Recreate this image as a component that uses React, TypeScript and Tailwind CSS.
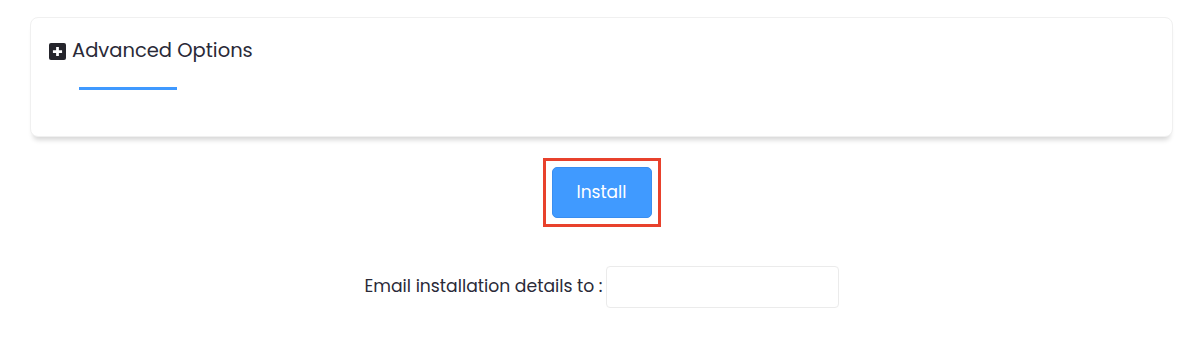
import { useState } from 'react';

export default function App() {
  const [email, setEmail] = useState('');

  return (
    <div className="w-[1200px] h-[344px] bg-white font-['Poppins','Inter',sans-serif] text-[#2a2a38]">
      {/* Advanced options card */}
      <div className="pt-[17px] pl-[30px] pr-[27px]">
        <div className="h-[120px] rounded-lg bg-white border border-[#f0f0f0] shadow-[0_6px_5px_-3px_rgba(0,0,0,0.16)] px-[18px] pt-[21px]">
          <div className="flex items-center gap-[6px]">
            <span className="w-[17px] h-[17px] rounded-[2px] bg-[#25252c] flex items-center justify-center">
              <svg viewBox="0 0 12 12" className="w-[11px] h-[11px]">
                <path d="M4.5 1h3v3.5H11v3H7.5V11h-3V7.5H1v-3h3.5z" fill="#fff" />
              </svg>
            </span>
            <span className="text-[19.5px] leading-[24px]">Advanced Options</span>
          </div>
          <div className="ml-[30px] mt-[24px] w-[98px] h-[3px] bg-[#3f99ff]" />
        </div>
      </div>

      {/* Install button */}
      <div className="flex justify-center mt-[21px] pl-[3px]">
        <div className="border-[3px] border-[#e8412c] p-[6px]">
          <button className="w-[100px] h-[51px] rounded-[5px] bg-[#409aff] text-white text-[17px] border border-[#3a8ef0]">
            Install
          </button>
        </div>
      </div>

      {/* Email row */}
      <div className="flex justify-center items-center mt-[39px] pl-[3px]">
        <label className="text-[17.2px] mr-[3px]">Email installation details to :</label>
        <input
          value={email}
          onChange={(e) => setEmail(e.target.value)}
          className="w-[233px] h-[42px] rounded border border-[#ebebeb] px-3 text-[15px] outline-none"
        />
      </div>
    </div>
  );
}
